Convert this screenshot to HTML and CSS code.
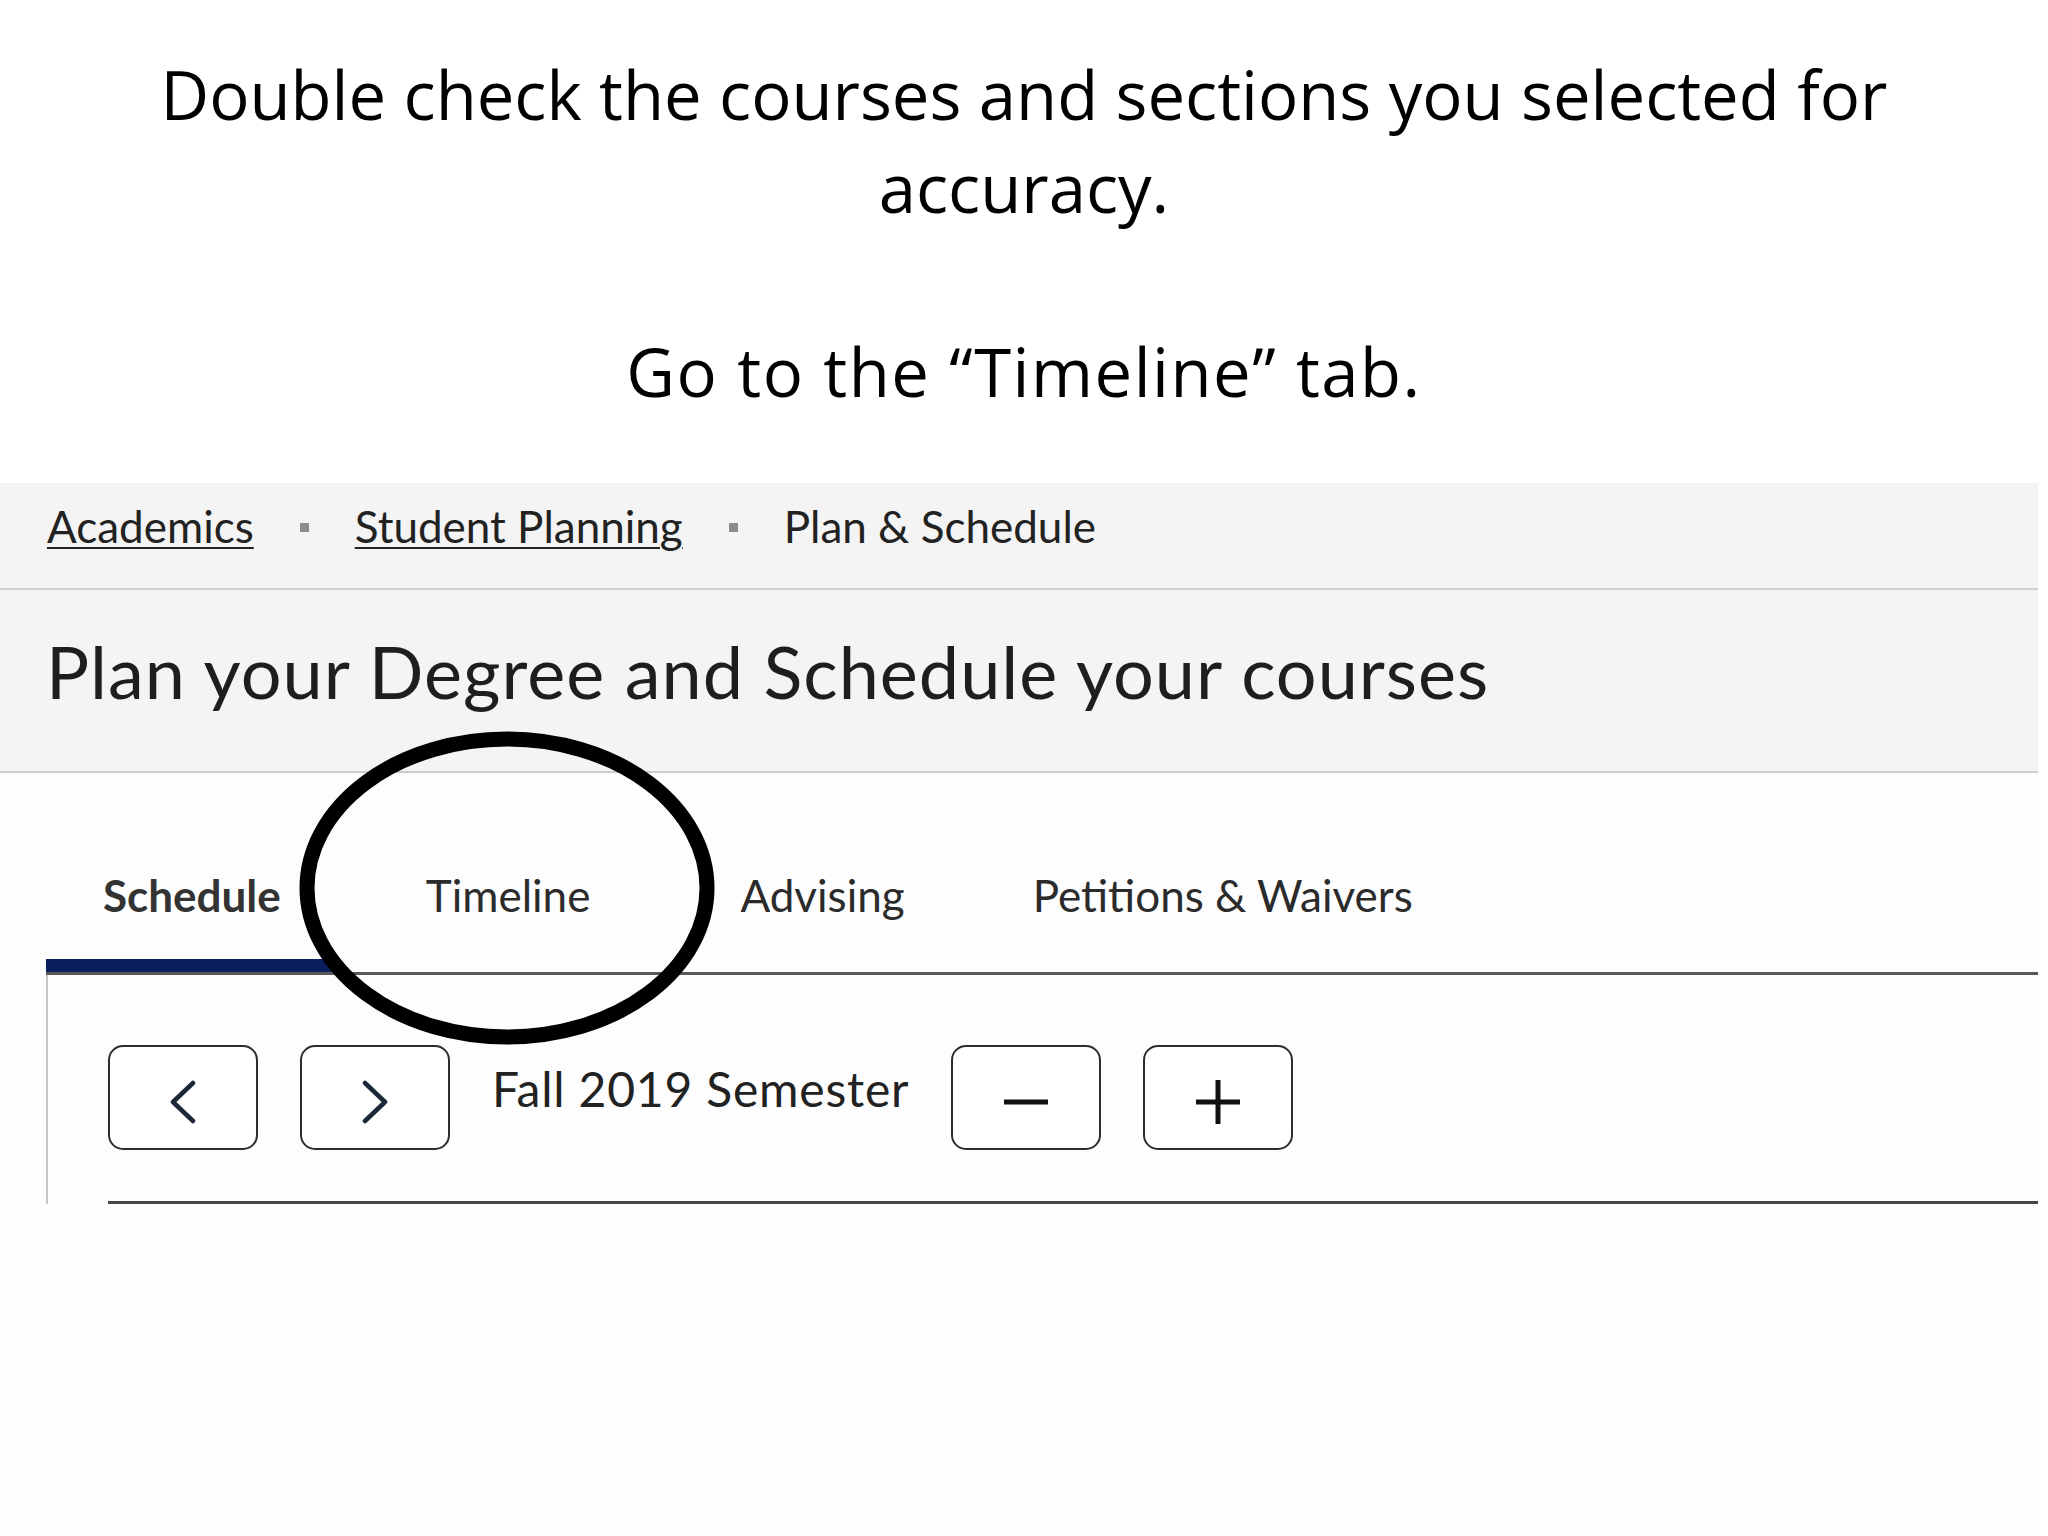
FILE: index.html
```html
<!DOCTYPE html>
<html lang="en">
<head>
    <meta charset="UTF-8">
    <meta name="viewport" content="width=device-width, initial-scale=1.0">
    <title>Plan &amp; Schedule - Timeline tab</title>
    <link rel="stylesheet" href="styles.css">
</head>
<body>
    <div class="slide-text">
        <p class="instruction">Double check the courses and sections you selected for<br>accuracy.</p>
        <p class="instruction step">Go to the “Timeline” tab.</p>
    </div>

    <div class="capture">
        <nav class="crumbs">
            <a href="#">Academics</a>
            <span class="sep"></span>
            <a href="#">Student Planning</a>
            <span class="sep"></span>
            <span class="current">Plan &amp; Schedule</span>
        </nav>

        <div class="page-head">
            <h1>Plan your Degree and Schedule your courses</h1>
        </div>

        <div class="tabs">
            <span class="tab active">Schedule</span>
            <span class="tab tab-timeline">Timeline</span>
            <span class="tab tab-advising">Advising</span>
            <span class="tab tab-petitions">Petitions &amp; Waivers</span>
        </div>

        <div class="tab-panel">
            <div class="term-bar">
                <button class="btn" aria-label="Previous term">
                    <svg width="26" height="44" viewBox="0 0 26 44"><polyline points="23,3 3,22 23,41" /></svg>
                </button>
                <button class="btn" aria-label="Next term">
                    <svg width="26" height="44" viewBox="0 0 26 44"><polyline points="3,3 23,22 3,41" /></svg>
                </button>
                <span class="term">Fall 2019 Semester</span>
                <button class="btn btn-sign" aria-label="Remove term">
                    <svg width="46" height="46" viewBox="0 0 46 46"><line x1="1" y1="23" x2="45" y2="23" /></svg>
                </button>
                <button class="btn btn-sign" aria-label="Add term">
                    <svg width="46" height="46" viewBox="0 0 46 46"><line x1="1" y1="23" x2="45" y2="23" /><line x1="23" y1="1" x2="23" y2="45" /></svg>
                </button>
            </div>
        </div>
    </div>

    <!-- hand drawn circle round the Timeline tab -->
    <svg class="callout" width="2048" height="1536" viewBox="0 0 2048 1536">
        <ellipse cx="507" cy="888" rx="200" ry="149" />
    </svg>
</body>
</html>
```

FILE: styles.css
```css
body {
    margin: 0;
    background: #fff;
    position: relative;
    min-height: 1536px;
    overflow: hidden;
}

/* slide text */
.slide-text {
    padding-top: 48px;
    font-family: "Open Sans", sans-serif;
    font-size: 67px;
    line-height: 93px;
    letter-spacing: 0;
    color: #000;
    text-align: center;
}
.instruction {
    margin: 0;
}
.step {
    margin-top: 91px;
    letter-spacing: 1.5px;
}

/* the screenshot */
.capture {
    margin-top: 65px;
    margin-right: 10px;
    min-height: 1054px;
    background: #fdfdfd;
    font-family: Lato, sans-serif;
    color: #222;
}

.crumbs {
    display: flex;
    align-items: flex-start;
    box-sizing: border-box;
    height: 107px;
    padding: 18px 0 0 47px;
    background: #f4f4f4;
    border-bottom: 2px solid #cfcfcf;
    font-size: 44px;
    line-height: 50px;
}
.crumbs a {
    color: #222;
    text-decoration: underline;
    text-decoration-thickness: 2px;
    text-underline-offset: 4px;
}
.sep {
    width: 9px;
    height: 9px;
    margin: 22px 46px 0;
    background: #8c8c8c;
}
.current {
    color: #222;
}

.page-head {
    box-sizing: border-box;
    height: 183px;
    padding: 41px 0 0 46px;
    background: #f4f4f4;
    border-bottom: 2px solid #cdcdcd;
}
.page-head h1 {
    margin: 0;
    font-size: 72px;
    line-height: 80px;
    letter-spacing: 1px;
    font-weight: 400;
    color: #1e1e1e;
}

.tabs {
    display: flex;
    margin-left: 46px;
    border-bottom: 3px solid #595959;
    font-size: 44px;
    line-height: 50px;
}
.tab {
    padding: 97px 57px 39px;
    border-bottom: 13px solid transparent;
    color: #2b2b2b;
}
.tab.active {
    border-bottom-color: #0b1f5c;
    font-weight: 700;
    color: #333;
}
.tab-timeline {
    margin-left: 31px;
}
.tab-advising {
    margin-left: 36px;
}
.tab-petitions {
    margin-left: 14px;
}

.tab-panel {
    margin-left: 46px;
    border-left: 2px solid #c6c6c6;
}
.term-bar {
    display: flex;
    align-items: flex-start;
    gap: 42px;
    margin-left: 60px;
    padding: 70px 0 51px;
    border-bottom: 3px solid #474747;
}
.btn {
    display: flex;
    align-items: center;
    justify-content: center;
    box-sizing: border-box;
    width: 150px;
    height: 105px;
    padding: 0;
    padding-top: 8px;
    background: #fff;
    border: 2px solid #2d2d2d;
    border-radius: 15px;
}
.btn polyline {
    fill: none;
    stroke: #1c2838;
    stroke-width: 4.5;
    stroke-linecap: round;
    stroke-linejoin: round;
}
.btn-sign line {
    stroke: #111;
    stroke-width: 5;
}
.term {
    margin-top: 15px;
    font-size: 48px;
    line-height: 58px;
    letter-spacing: 0.8px;
    color: #222;
}

/* annotation */
.callout {
    position: absolute;
    left: 0;
    top: 0;
    pointer-events: none;
}
.callout ellipse {
    fill: none;
    stroke: #000;
    stroke-width: 15;
}
```
